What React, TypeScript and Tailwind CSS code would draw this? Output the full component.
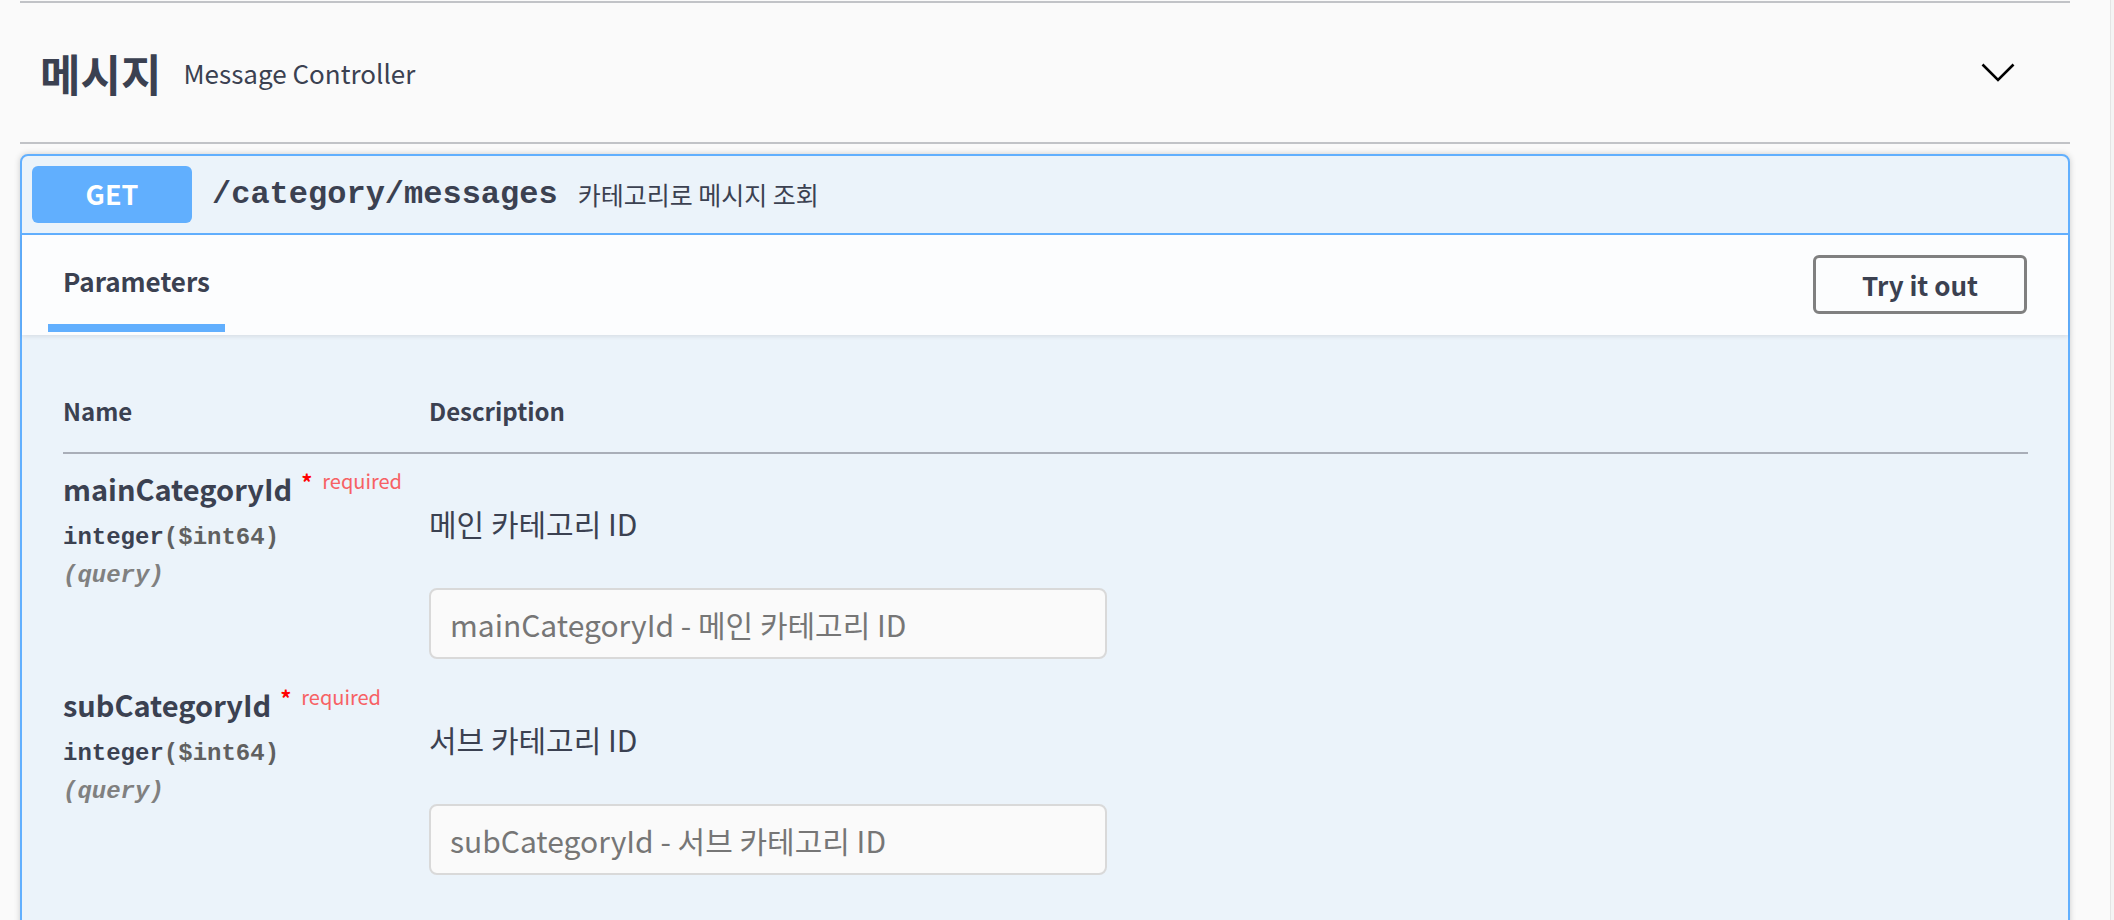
import React from 'react';

const params = [
  { name: 'mainCategoryId', desc: '메인 카테고리 ID' },
  { name: 'subCategoryId', desc: '서브 카테고리 ID' },
];

const ParamRow = ({ name, desc }: { name: string; desc: string }) => {
  return (
    <div className="grid grid-cols-[366px_1fr] items-start pb-[11px]">
      <div className="pt-[15px]">
        <div className="flex items-baseline text-[29px] leading-[38px] font-semibold">
          <span>{name}</span>
          <span className="ml-[9px] text-[22px] font-bold text-[#ff0000] relative top-[-10px]">*</span>
          <span className="ml-[10px] text-[20px] font-normal text-[#f76164] relative top-[-12px]">required</span>
        </div>
        <div className="mt-[11px] font-['Liberation_Mono',monospace] text-[24px] leading-[29px] font-bold">
          integer<span className="text-[#606060]">($int64)</span>
        </div>
        <div className="mt-[9px] font-['Liberation_Mono',monospace] text-[24px] leading-[29px] font-bold italic text-[#808080]">
          (query)
        </div>
      </div>
      <div className="pt-[52px]">
        <p className="text-[30px] leading-[34px]">{desc}</p>
        <input
          type="text"
          placeholder={`${name} - ${desc}`}
          className="mt-[48px] block w-[678px] h-[71px] rounded-[8px] border-2 border-[#d9d9d9] bg-[#fafafa] px-[19px] font-['Noto_Sans_CJK_KR',sans-serif] text-[30px] text-[#3b4151] placeholder:text-[#767676] outline-none"
        />
      </div>
    </div>
  );
};

const App = () => {
  return (
    <div className="flex h-[920px] overflow-hidden bg-[#fafafa] font-['Noto_Sans_CJK_KR',sans-serif] text-[#3b4151]">
      <div className="ml-[20px] mr-[40px] flex-1 min-w-0">
        {/* Tag header */}
        <div className="mt-[1px] flex h-[143px] items-center border-y-2 border-[#c1c3c7]">
          <h3 className="pl-[20px] text-[44px] leading-none font-bold">메시지</h3>
          <span className="ml-[22px] text-[26px] leading-none">Message Controller</span>
          <svg className="ml-auto mr-[55px]" width="34" height="19" viewBox="0 0 34 19" fill="none">
            <path d="M1.5 1.5 L17 17 L32.5 1.5" stroke="#000" strokeWidth="2.6" />
          </svg>
        </div>

        {/* Operation block */}
        <div className="mt-[10px] rounded-[8px] border-2 border-[#61affe] bg-[#ebf3fa] shadow-[0_0_6px_rgba(0,0,0,0.19)]">
          <div className="flex items-center border-b-2 border-[#61affe] p-[10px]">
            <div className="flex h-[57px] w-[160px] items-center justify-center rounded-[6px] bg-[#61affe] text-[27px] font-bold text-white">
              GET
            </div>
            <span className="ml-[20px] font-['Liberation_Mono',monospace] text-[32px] font-bold">/category/messages</span>
            <span className="ml-[20px] text-[25px]">카테고리로 메시지 조회</span>
          </div>

          <div className="flex h-[100px] items-stretch justify-between bg-[#fcfdfe] shadow-[0_2px_4px_rgba(0,0,0,0.08)]">
            <div className="ml-[26px] flex flex-col">
              <div className="px-[15px] pt-[29px] text-[26px] leading-[34px] font-semibold">Parameters</div>
              <div className="mt-auto mb-[3px] h-[8px] bg-[#61affe]" />
            </div>
            <button className="mr-[41px] mt-[20px] h-[59px] w-[214px] rounded-[6px] border-[3px] border-[#808080] text-[26px] font-bold text-[#3b4151]">
              Try it out
            </button>
          </div>

          <div className="pl-[41px] pr-[40px] pt-[61px] pb-[80px]">
            <div className="grid grid-cols-[366px_1fr] border-b-2 border-[#a9aeb8] pb-[27px] text-[24px] leading-[29px] font-bold">
              <div>Name</div>
              <div>Description</div>
            </div>
            {params.map((p) => (
              <ParamRow key={p.name} name={p.name} desc={p.desc} />
            ))}
          </div>
        </div>
      </div>
      <div className="w-[4px] border-l border-[#e4e4e4] bg-[#f4f4f4]" />
    </div>
  );
};

export default App;
